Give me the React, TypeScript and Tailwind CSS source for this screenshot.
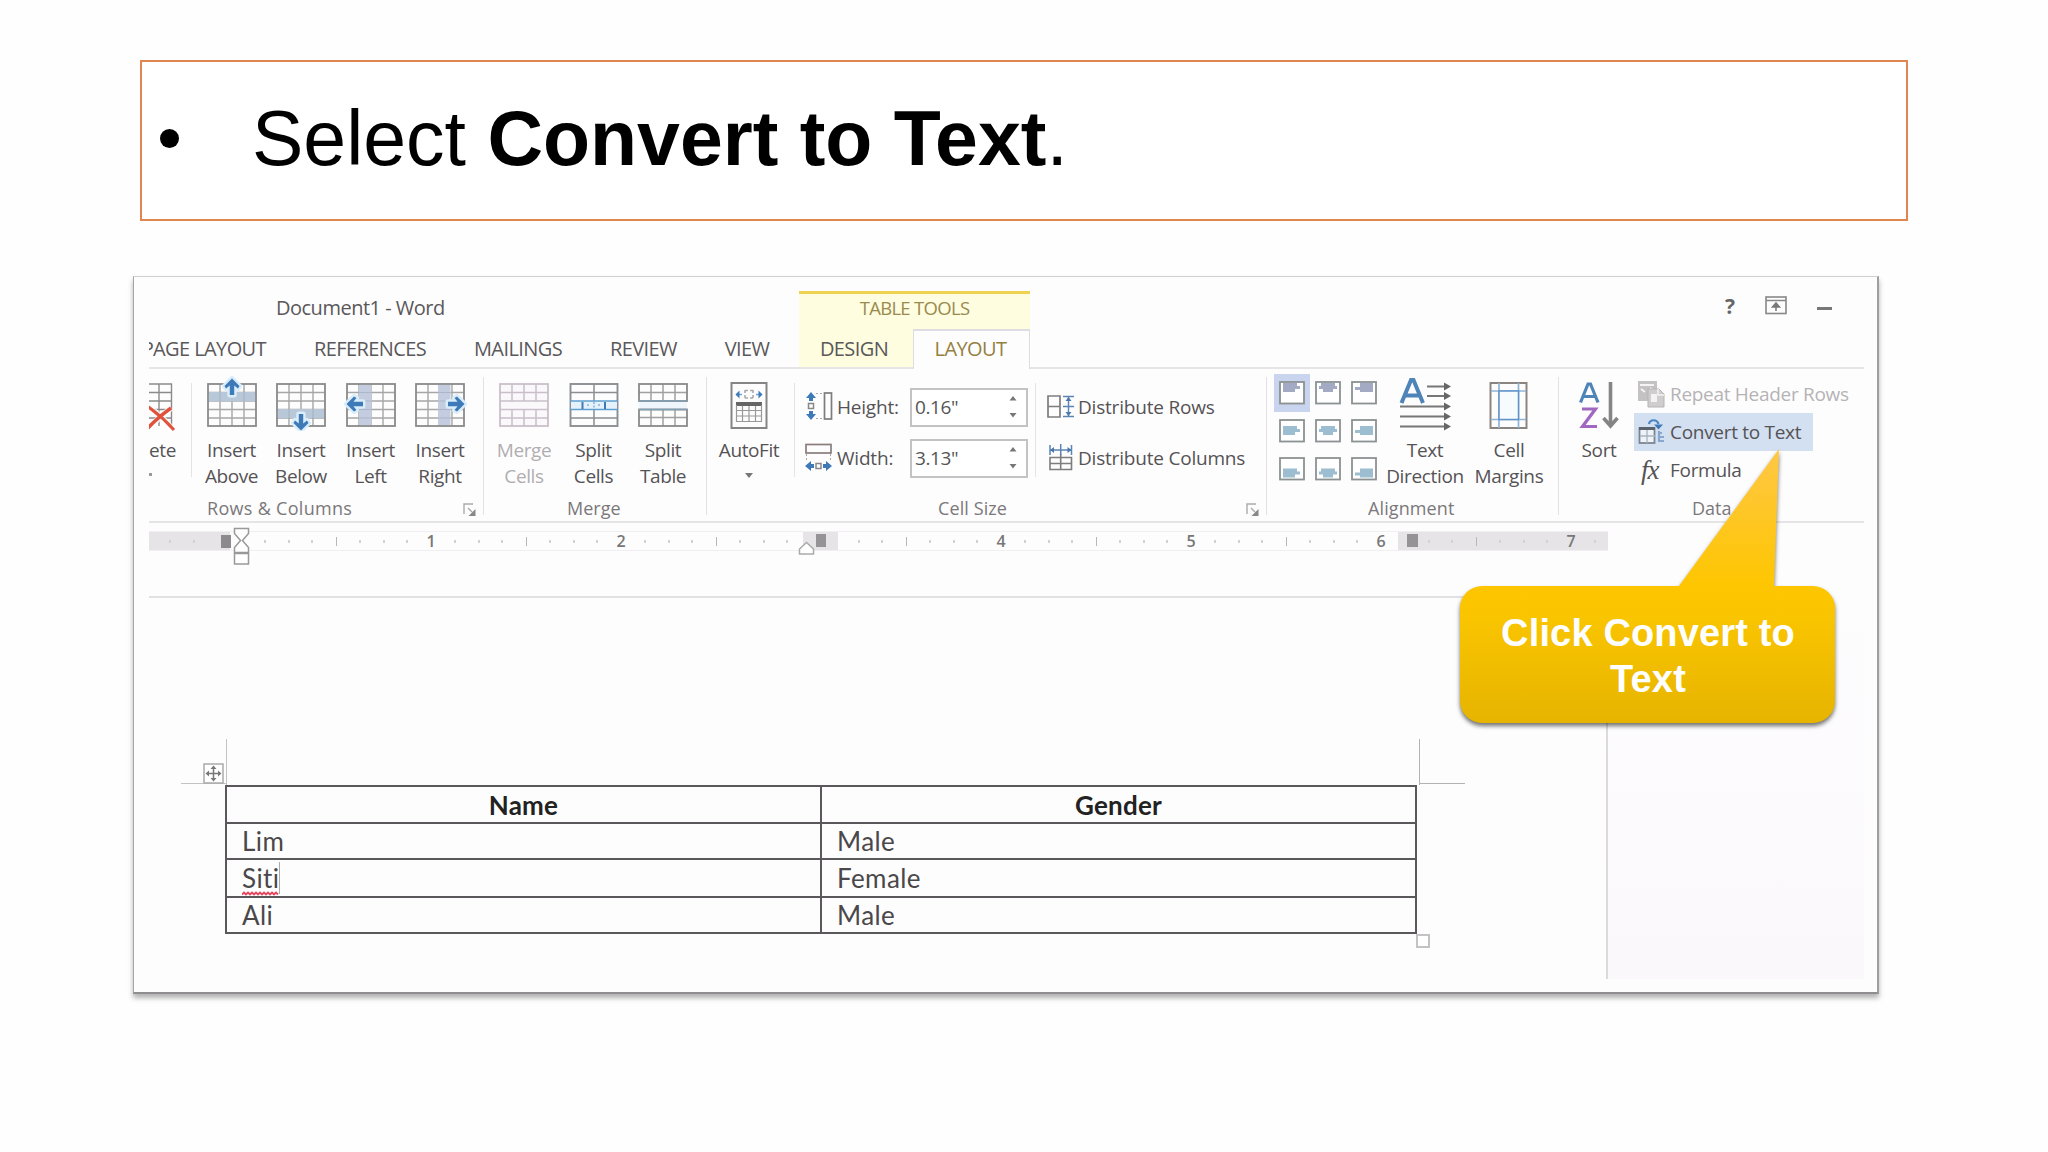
import React from "react";

const G = "#8a8a8a";
const BLUE = "#3f7ab8";

/* ---------- icons ---------- */

function Grid({ color = G, children }: { color?: string; children?: React.ReactNode }) {
  return (
    <svg width="60" height="56" viewBox="0 0 60 56" fill="none">
      <g stroke={color} strokeWidth="1.4">
        <path d="M18 9v42M30 9v42M42 9v42M6 17.5h48M6 26h48M6 34.5h48M6 43h48" opacity=".75" />
        <rect x="6" y="9" width="48" height="42" strokeWidth="1.8" />
      </g>
      {children}
    </svg>
  );
}

const ARROW = "M0 -8.5 L7.5 -1 L6 1.5 L2.2 -1.6 V8 H-2.2 V-1.6 L-6 1.5 L-7.5 -1 Z";

function Arrow({ x, y, r }: { x: number; y: number; r: number }) {
  return (
    <g transform={`translate(${x} ${y}) rotate(${r})`}>
      <path d={ARROW} stroke="#d9edfa" strokeWidth="5" strokeLinejoin="round" />
      <path d={ARROW} fill={BLUE} />
    </g>
  );
}

function InsertAbove() {
  return (
    <Grid>
      <rect x="7" y="17" width="46" height="9.5" fill="#b9c8d8" />
      <path d="M18 17v9M42 17v9" stroke="#9fb0c0" />
      <Arrow x={30} y={12} r={0} />
    </Grid>
  );
}
function InsertBelow() {
  return (
    <Grid>
      <rect x="7" y="34" width="46" height="9" fill="#b9c8d8" />
      <path d="M18 34v9M42 34v9" stroke="#9fb0c0" />
      <Arrow x={30} y={47} r={180} />
    </Grid>
  );
}
function InsertLeft() {
  return (
    <Grid>
      <rect x="18" y="10" width="12.5" height="40" fill="#c3cddf" />
      <path d="M18 17.5h12M18 26h12M18 34.5h12M18 43h12" stroke="#a9b6cb" />
      <Arrow x={14} y={29} r={-90} />
    </Grid>
  );
}
function InsertRight() {
  return (
    <Grid>
      <rect x="28" y="10" width="12.5" height="40" fill="#c3cddf" />
      <path d="M28 17.5h12M28 26h12M28 34.5h12M28 43h12" stroke="#a9b6cb" />
      <Arrow x={46} y={29} r={90} />
    </Grid>
  );
}
function MergeCells() {
  return (
    <svg width="60" height="56" viewBox="0 0 60 56" fill="none" stroke="#c9bfc9" strokeWidth="1.5">
      <rect x="6" y="9" width="48" height="42" fill="#fbf8fb" strokeWidth="1.8" />
      <path d="M6 17.5h48M6 26h48M6 34.5h48M6 43h48M18 9v17M30 9v17M42 9v17M18 34.5V51M30 34.5V51M42 34.5V51" />
    </svg>
  );
}
function SplitCells() {
  return (
    <svg width="60" height="56" viewBox="0 0 60 56" fill="none" stroke="#8b8f92" strokeWidth="1.5">
      <rect x="6.5" y="9" width="47" height="42" strokeWidth="1.9" />
      <path d="M6 17.5h48M6 43h48M30 9v17M30 34.5V51" />
      <rect x="7" y="26" width="46" height="9" fill="#e6f2fb" stroke="none" />
      <path d="M6 26h48M6 34.5h48" stroke="#5f9fd0" />
      <path d="M18.5 27v7M41 27v7" stroke={BLUE} strokeWidth="2" />
      <path d="M30 27v7M24 29v3M35 29v3" stroke="#86b3da" strokeDasharray="2 1.5" />
    </svg>
  );
}
function SplitTable() {
  return (
    <svg width="60" height="56" viewBox="0 0 60 56" fill="none" stroke={G} strokeWidth="1.5">
      <rect x="6" y="26" width="48" height="8.5" fill="#eef6fc" stroke="none" />
      <rect x="6" y="9" width="48" height="17" strokeWidth="1.8" />
      <rect x="6" y="34.5" width="48" height="16.5" strokeWidth="1.8" />
      <path d="M6 17.5h48M6 42.5h48M18 9v17M30 9v17M42 9v17M18 35v16M30 35v16M42 35v16" opacity=".8" />
      <path d="M6 26h48M6 34.5h48" stroke="#7f9fb4" />
    </svg>
  );
}
function AutoFit() {
  return (
    <svg width="60" height="56" viewBox="0 0 60 56" fill="none" stroke="#858585" strokeWidth="1.6">
      <rect x="12.5" y="8" width="35" height="45" strokeWidth="2" />
      <path d="M26 15.500h8M26 23h8" stroke="#aaa" strokeDasharray="3 2" />
      <path d="M26 15v8M34 15v8" stroke="#aaa" strokeDasharray="3 2" />
      <path d="M17 19.5h6M37 19.5h6" stroke="#6fa5d2" />
      <path d="M16.5 19.5l4-4v8zM43.5 19.5l-4-4v8z" fill={BLUE} stroke="none" />
      <path d="M17 29h26" stroke="#666" strokeWidth="4" />
      <path d="M17.5 30v16.5h25V30M17.5 35.5h25M17.5 41h25M23.5 31v15M30 31v15M36.5 31v15" stroke="#999" strokeWidth="1.2" />
    </svg>
  );
}
function DeleteIcon() {
  return (
    <svg width="30" height="56" viewBox="0 0 30 56" fill="none">
      <path d="M0 9h22.5v42M0 17.5h22M0 26h22M0 34.5h22M0 43h22M10 9v42" stroke={G} strokeWidth="1.4" />
      <path d="M1 33C8 38 17 46 24 55M22 33C15 39 6 46 -1 54" stroke="#fff" strokeWidth="6" opacity=".8" />
      <path d="M-2 31C8 38 17 46 25 55" stroke="#e0523c" strokeWidth="3" />
      <path d="M22 33C15 38 6 45 -2 54" stroke="#e0523c" strokeWidth="3.6" />
    </svg>
  );
}
function HeightIcon() {
  return (
    <svg width="28" height="30" viewBox="0 0 28 30" fill="none">
      <path d="M6 0L11 6H8V9H4V6H1Z M6 28L11 22H8V19H4V22H1Z" fill={BLUE} />
      <rect x="3.5" y="11.5" width="5" height="5" stroke="#888" strokeWidth="1.5" />
      <path d="M11 1.5h9M11 26.5h9" stroke="#aaa" strokeDasharray="2 2" />
      <rect x="19.5" y="1" width="7" height="26" stroke="#7d7d7d" strokeWidth="1.7" />
    </svg>
  );
}
function WidthIcon() {
  return (
    <svg width="28" height="30" viewBox="0 0 28 30" fill="none">
      <rect x="1" y="1.5" width="25" height="8.5" stroke="#8a7d7d" strokeWidth="1.7" />
      <path d="M1.5 11v6M25.5 11v6" stroke="#aaa" strokeDasharray="2 2" />
      <path d="M0 23L6 18V21H9V25H6V28Z M27 23L21 18V21H18V25H21V28Z" fill={BLUE} />
      <rect x="11" y="20.5" width="5" height="5" stroke="#888" strokeWidth="1.5" />
    </svg>
  );
}
function DistRows() {
  return (
    <svg width="28" height="26" viewBox="0 0 28 26" fill="none">
      <path d="M1 2h12v21H1zM1 12.5h12" stroke="#7d7d7d" strokeWidth="1.7" />
      <path d="M16 2.5h11M16 12.5h11M16 22.5h11" stroke="#5c84b5" strokeWidth="1.5" />
      <path d="M21.5 2v21" stroke="#5c84b5" strokeWidth="1.5" />
      <path d="M21.5 3l3 4h-6zM21.5 22l3-4h-6z" fill="#4b78ad" />
    </svg>
  );
}
function DistCols() {
  return (
    <svg width="28" height="28" viewBox="0 0 28 28" fill="none">
      <path d="M3 13.5h21.5v12H3zM3 19.5h21.5M13.7 10v16" stroke="#7d7d7d" strokeWidth="1.6" />
      <path d="M3 1v10M13.7 0v11M24.5 1v10M3 6h21.5" stroke="#5c84b5" strokeWidth="1.5" />
      <path d="M3 6l4-3v6zM24.5 6l-4-3v6z" fill="#4b78ad" />
    </svg>
  );
}
function AlignIcon({ h, v }: { h: number; v: number }) {
  const y = [2, 7, 11.5][v];
  const fill = v === 0 ? "#a3abc4" : "#9dbdd0";
  const pts = [
    `M4 ${y}h14v3h3v3h-5v3H4z`,
    `M6 ${y}h14v3h2v3h-4v3H8v-3H4v-3h2z`,
    `M9 ${y}h13v9h-13v-2h-5v-3h5z`,
  ][h];
  return (
    <svg width="26" height="24" viewBox="0 0 26 24" fill="none">
      <rect x="1" y="1" width="24" height="21.5" fill="#fff" stroke="#8b9291" strokeWidth="1.8" />
      <path d={pts} fill={fill} />
    </svg>
  );
}
function TextDirection() {
  return (
    <svg width="56" height="56" viewBox="0 0 56 56" fill="none">
      <path d="M4.5 28L14 5h2.5L26 28M8.5 20.5h13.5" stroke="#4f84b8" strokeWidth="4" />
      {[11.5, 21].map((y) => (
        <path key={y} d={`M30 ${y}h18`} stroke="#777" strokeWidth="2" />
      ))}
      {[31.5, 41.5, 51.5].map((y) => (
        <path key={y} d={`M3 ${y}h46`} stroke="#777" strokeWidth="2" />
      ))}
      {[11.5, 21, 31.5, 41.5, 51.5].map((y) => (
        <path key={y} d={`M47 ${y - 4}l7 4l-7 4z`} fill="#666" />
      ))}
    </svg>
  );
}
function CellMargins() {
  return (
    <svg width="60" height="56" viewBox="0 0 60 56" fill="none">
      <rect x="11.5" y="8" width="36" height="45" stroke="#8a8580" strokeWidth="2" />
      <path d="M20 8v45M39.5 8v45M12 16h35M12 44.5h35" stroke="#8fb4d8" strokeWidth="1.7" />
      <path d="M20 16h19.5v28.5H20z" fill="#f6fbfe" stroke="#5f93c8" strokeWidth="1.5" />
    </svg>
  );
}
function SortIcon() {
  return (
    <svg width="44" height="56" viewBox="0 0 44 56" fill="none">
      <path d="M3.5 27.5L11 9h2.5L21 27.5M6.5 21.5H18" stroke="#4f84b8" strokeWidth="3.2" />
      <path d="M5 34h13.5L5.5 51.5H20" stroke="#a068c0" strokeWidth="3.2" />
      <path d="M33.5 7v44M26.5 43l7 8l7-8" stroke="#858585" strokeWidth="3.6" />
    </svg>
  );
}
function RepeatIcon() {
  return (
    <svg width="28" height="28" viewBox="0 0 28 28" fill="none">
      <rect x="0" y="1" width="19" height="20" fill="#c4c2c2" />
      <path d="M2 5h14M3 9l4 3M12 8l3 2" stroke="#f4f4f4" strokeWidth="2" />
      <path d="M10 9h11l5 5v13H10z" fill="#cfcdcd" stroke="#b5b3b3" />
      <path d="M13 14h6v8h-6z" fill="#f3f3f3" />
      <path d="M20 9v6h6" stroke="#f4f4f4" strokeWidth="1.5" />
    </svg>
  );
}
function ConvertIcon() {
  return (
    <svg width="28" height="28" viewBox="0 0 28 28" fill="none">
      <rect x="1.5" y="10" width="15" height="15" fill="#eef3fa" stroke="#7d8590" strokeWidth="1.8" />
      <path d="M1 10.5h16" stroke="#5a626c" strokeWidth="3" />
      <path d="M2 18h15M9 12v13" stroke="#aab4be" strokeWidth="1.3" />
      <path d="M11 6C12 1 19 1 20.500 6" stroke="#4a86c4" strokeWidth="2.2" />
      <path d="M16 6.5h9L20.5 11.500z" fill="#3f7ab8" />
      <path d="M21 13v11M21 15h3M21 19h5M21 23h5" stroke="#86a8cc" strokeWidth="2.2" />
    </svg>
  );
}
function Launcher() {
  return (
    <svg width="14" height="14" viewBox="0 0 14 14" fill="none">
      <path d="M1 11V1h9" stroke="#aaa" strokeWidth="1.4" />
      <path d="M5 5l4 4" stroke="#aaa" strokeWidth="1.4" />
      <path d="M12.5 6v7h-7z" fill="#888" />
    </svg>
  );
}

/* ---------- ribbon parts ---------- */

function BigButton({
  icon, lines, box, dim = false, caret = false, tight,
}: {
  icon: React.ReactNode; lines: string[]; box: string; dim?: boolean; caret?: boolean; tight?: string;
}) {
  return (
    <div className={`flex flex-none flex-col items-center ${box}`}>
      <div className="flex h-[68px] flex-none items-start pt-[6px]">{icon}</div>
      {lines.map((l) => (
        <div
          key={l}
          className={`flex h-[26px] justify-center whitespace-nowrap text-[19px] leading-[26px] ${tight ?? "tracking-[-0.4px]"} ${dim ? "text-[#b0aeb0]" : "text-[#555355]"}`}
        >
          {l}
        </div>
      ))}
      {caret && (
        <svg width="8" height="5" viewBox="0 0 8 5" className="mt-[10px]">
          <path d="M0 0h8L4 5z" fill="#777" />
        </svg>
      )}
    </div>
  );
}

function ShortSep() {
  return <div className="mt-[14px] h-[94px] w-px flex-none bg-[#e6e3e6]" />;
}

function Group({ box, label, labelBox, launcher, children, last }: {
  box: string; label: string; labelBox: string; launcher?: boolean; children: React.ReactNode; last?: boolean;
}) {
  return (
    <div className={`flex flex-none ${box}`}>
      <div className="flex min-w-0 flex-1 flex-col">
        <div className="flex h-[126px] flex-none">{children}</div>
        <div className="flex h-[27px] items-start justify-between pr-[6px]">
          <div className={`whitespace-nowrap text-[18px] leading-[26px] text-[#7a787a] ${labelBox}`}>{label}</div>
          {launcher && <div className="pt-[8px]"><Launcher /></div>}
        </div>
      </div>
      {!last && <div className="mt-[8px] h-[138px] w-px flex-none bg-[#e3e1e3]" />}
    </div>
  );
}

function SpinBox({ value }: { value: string }) {
  return (
    <div className="flex h-[39px] w-[118px] items-center justify-between border-2 border-[#c4c2c4] bg-white pl-[3px] pr-[8px] text-[19px] tracking-[-0.4px] text-[#555]">
      <span>{value}</span>
      <svg width="10" height="22" viewBox="0 0 10 22" fill="#777">
        <path d="M1.5 4.5h7L5 0zM1.5 17h7L5 21.5z" />
      </svg>
    </div>
  );
}

/* ---------- ruler ---------- */

const TICKS = Array.from({ length: 61 }, (_, k) => k - 3);
const HIDDEN = [-1, 0, 24, 25, 49];

function Ruler() {
  return (
    <div className="relative mt-[8px] flex h-[20px] w-[1459px] flex-none border-y border-[#f1eff1]">
      <div className="w-[81px] flex-none bg-[#e6e4e6]" />
      <div className="w-[573px] flex-none" />
      <div className="w-[35px] flex-none bg-[#e6e4e6]" />
      <div className="w-[560px] flex-none" />
      <div className="flex-1 bg-[#e6e4e6]" />
      <div className="absolute inset-y-0 left-[9px] flex items-center">
        {TICKS.map((i) => (
          <div key={i} className="flex w-[23.75px] flex-none items-center justify-center">
            {HIDDEN.includes(i) ? null : i > 0 && i % 8 === 0 ? (
              <span className="text-[16px] font-semibold leading-[18px] text-[#777]">{i / 8}</span>
            ) : i > 0 && i % 4 === 0 ? (
              <span className="h-[9px] w-px bg-[#b9b7b9]" />
            ) : (
              <span className="h-[3px] w-[2px] bg-[#d3d1d3]" />
            )}
          </div>
        ))}
      </div>
      <div className="absolute left-[72px] top-[3px] h-[13px] w-[10px] bg-[#8c8a8c]" />
      <div className="absolute left-[667px] top-[2px] h-[13px] w-[10px] bg-[#959395]" />
      <div className="absolute left-[1258px] top-[2px] h-[13px] w-[11px] bg-[#959395]" />
      <svg className="absolute left-[84px] top-[-5px]" width="18" height="39" viewBox="0 0 18 39" fill="#fff" stroke="#999" strokeWidth="1.5">
        <path d="M1.5 1.5h14v5l-6 7l6 7v5h-14v-5l6-7l-6-7z" />
        <path d="M1.5 26.5h14v10.5h-14z" />
      </svg>
      <svg className="absolute left-[649px] top-[9px]" width="18" height="15" viewBox="0 0 18 15" fill="#fff" stroke="#aaa" strokeWidth="1.5">
        <path d="M1.5 13h14V8l-7-6.5l-7 6.5z" />
      </svg>
    </div>
  );
}

/* ---------- document table ---------- */

const ROWS = [
  { name: "Lim", gender: "Male", h: "h-[36px]" },
  { name: "Siti", gender: "Female", h: "h-[38px]" },
  { name: "Ali", gender: "Male", h: "h-[36px]" },
];

function DocTable() {
  return (
    <div className="relative ml-[76px] mt-[187px] w-[1192px] border-x-2 border-b-2 border-[#5a585a] font-['Lato'] text-[26px] leading-[30px] tracking-[0.4px] text-[#4a484a]">
      <div className="flex h-[37px] border-t-2 border-[#5a585a] font-bold tracking-[0.2px] text-[#222]">
        <div className="flex w-[595px] items-center justify-center border-r-2 border-[#5a585a]">Name</div>
        <div className="flex flex-1 items-center justify-center">Gender</div>
      </div>
      {ROWS.map((r) => (
        <div key={r.name} className={`flex border-t-2 border-[#5a585a] ${r.h}`}>
          <div className="flex w-[595px] items-center border-r-2 border-[#5a585a] pb-px pl-[15px]">
            {r.name === "Siti" ? (
              <span className="relative border-r border-[#aaa] leading-[32px]">
                {r.name}
                <svg className="absolute left-0 top-[29px]" width="38" height="5" viewBox="0 0 38 5" fill="none">
                  <path d="M0 3.5l2-2l2 2l2-2l2 2l2-2l2 2l2-2l2 2l2-2l2 2l2-2l2 2l2-2l2 2l2-2l2 2l2-2l2 2" stroke="#e8455c" strokeWidth="1.8" />
                </svg>
              </span>
            ) : (
              r.name
            )}
          </div>
          <div className="flex flex-1 items-center pb-px pl-[15px]">{r.gender}</div>
        </div>
      ))}
      <div className="absolute left-[-1px] top-[-46px] h-[46px] w-px bg-[#c4c2c4]" />
      <div className="absolute left-[-46px] top-[-2px] h-px w-[46px] bg-[#c4c2c4]" />
      <div className="absolute right-[-5px] top-[-46px] h-[46px] w-px bg-[#b4b2b4]" />
      <div className="absolute right-[-50px] top-[-2px] h-px w-[46px] bg-[#b4b2b4]" />
      <svg className="absolute left-[-24px] top-[-22px]" width="21" height="21" viewBox="0 0 21 21" fill="none">
        <rect x="1" y="1" width="19" height="19" fill="#fff" stroke="#aaa" strokeWidth="1.5" />
        <path d="M10.5 4v13M4 10.5h13" stroke="#777" strokeWidth="1.5" />
        <path d="M10.5 2.5l3 3.5h-6zM10.5 18.5l3-3.5h-6zM2.5 10.5l3.5-3v6zM18.5 10.5l-3.5-3v6z" fill="#777" />
      </svg>
      <div className="absolute bottom-[-16px] right-[-15px] size-[14px] border-2 border-[#c4c2c4] bg-white" />
    </div>
  );
}

/* ---------- callout ---------- */

function Callout() {
  return (
    <div className="absolute left-[1326px] top-[172px] flex h-[275px] w-[376px] flex-col">
      <svg className="absolute inset-0 overflow-visible" width="376" height="275" viewBox="0 0 376 275">
        <defs>
          <linearGradient id="gold" x1="0" y1="0" x2="0" y2="1">
            <stop offset="0" stopColor="#ffc746" />
            <stop offset=".5" stopColor="#fec600" />
            <stop offset=".62" stopColor="#f9c400" />
            <stop offset="1" stopColor="#e6b400" />
          </linearGradient>
        </defs>
        <path
          d="M22 137H219L319 0L314 137H353A22 22 0 0 1 375 159V252A22 22 0 0 1 353 274H22A22 22 0 0 1 0 252V159A22 22 0 0 1 22 137Z"
          fill="url(#gold)"
          className="drop-shadow-[0_3px_2px_rgba(0,0,0,0.55)]"
        />
      </svg>
      <div className="relative mt-[161px] text-center font-['Liberation_Sans'] text-[38px] font-bold leading-[46px] tracking-[0.15px] text-white">
        Click Convert to
        <br />
        Text
      </div>
    </div>
  );
}

export default function App() {
  return (
    <div className="h-[1152px] w-[2048px] overflow-hidden bg-[#fefefe] pt-[60px] font-['Open_Sans',sans-serif]">
      <div className="ml-[140px] flex h-[161px] w-[1768px] items-center border-2 border-[#e08650] bg-white pb-[4px] font-['Liberation_Sans'] text-[77px] leading-none text-black">
        <span className="ml-[18px] size-[19px] rounded-full bg-black" />
        <span className="ml-[73px] whitespace-pre">
          Select <b>Convert to Text</b>.
        </span>
      </div>

      <div className="relative ml-[133px] mt-[55px] flex h-[718px] w-[1746px] flex-col border-b-2 border-l border-r-2 border-t border-b-[#8f8d8f] border-l-[#a5a3a5] border-r-[#a09ea0] border-t-[#d2d0d2] bg-[#fefdfe] pl-[15px] pr-[13px] shadow-[0_4px_5px_rgba(0,0,0,0.3)]">
        {/* title bar and tabs */}
        <div className="flex h-[92px] flex-none text-[20px] leading-[28px] text-[#5a585a]">
          <div className="flex w-[650px] flex-col border-b-2 border-[#e6e4e6]">
            <div className="ml-[127px] mt-[17px] h-[41px] tracking-[-0.5px]">Document1 - Word</div>
            <div className="flex w-[650px] overflow-hidden whitespace-nowrap tracking-[-0.6px]">
              <div className="flex w-[117px] flex-none justify-end">PAGE LAYOUT</div>
              <div className="ml-[33px] flex w-[142px] flex-none justify-center">REFERENCES</div>
              <div className="flex w-[154px] flex-none justify-center">MAILINGS</div>
              <div className="flex w-[97px] flex-none justify-center">REVIEW</div>
              <div className="flex w-[110px] flex-none justify-center">VIEW</div>
            </div>
          </div>
          <div className="mt-[14px] flex w-[231px] flex-col border-t-[3px] border-[#efd24f] bg-[#fefde0]">
            <div className="h-[35px] pt-px text-center text-[18.5px] leading-[26px] tracking-[-0.7px] text-[#9a8a4e]">TABLE TOOLS</div>
            <div className="flex h-[40px] tracking-[-0.6px]">
              <div className="w-[114px] border-b-2 border-[#e6e4e6] pt-[6px] text-center">
                <span className="pr-[4px]">DESIGN</span>
              </div>
              <div className="flex-1 border-x border-t-2 border-[#dfdde2] bg-[#fefdfe] pr-[2px] pt-[4px] text-center text-[#94803f]">LAYOUT</div>
            </div>
          </div>
          <div className="flex flex-1 justify-end gap-[30px] border-b-2 border-[#e6e4e6] pr-[32px] pt-[15px]">
            <span className="text-[21px] font-bold text-[#666]">?</span>
            <svg width="22" height="19" viewBox="0 0 22 19" fill="none" className="mt-[4px]">
              <rect x="1" y="1" width="20" height="16.5" stroke="#888" strokeWidth="1.6" />
              <path d="M1 4.5h20" stroke="#888" strokeWidth="1.5" />
              <path d="M11 15V8M7.5 11L11 7l3.5 4z" stroke="#777" strokeWidth="1.5" fill="#777" />
            </svg>
            <div className="mt-[15px] h-[3px] w-[15px] bg-[#777]" />
          </div>
        </div>

        {/* ribbon */}
        <div className="flex h-[153px] flex-none">
          <Group box="w-[335px]" label="Rows & Columns" labelBox="ml-[58px] tracking-[0.3px]" launcher>
            <div className="flex w-[42px] flex-none flex-col overflow-hidden">
              <div className="flex h-[68px] flex-none pt-[6px]">
                <DeleteIcon />
              </div>
              <div className="text-[19px] leading-[26px] tracking-[-0.4px] text-[#555355]">ete</div>
              <div className="mt-[10px] size-[3px] bg-[#999]" />
            </div>
            <ShortSep />
            <BigButton box="ml-[5px] w-[69px]" icon={<InsertAbove />} lines={["Insert", "Above"]} />
            <BigButton box="w-[70px]" icon={<InsertBelow />} lines={["Insert", "Below"]} />
            <BigButton box="w-[69px]" icon={<InsertLeft />} lines={["Insert", "Left"]} />
            <BigButton box="w-[70px]" icon={<InsertRight />} lines={["Insert", "Right"]} />
          </Group>

          <Group box="w-[223px]" label="Merge" labelBox="ml-[83px]">
            <BigButton box="ml-[5px] w-[70px]" icon={<MergeCells />} lines={["Merge", "Cells"]} dim />
            <BigButton box="w-[69px]" icon={<SplitCells />} lines={["Split", "Cells"]} />
            <BigButton box="w-[70px]" icon={<SplitTable />} lines={["Split", "Table"]} />
          </Group>

          <Group box="w-[560px]" label="Cell Size" labelBox="ml-[231px] tracking-[0.1px]" launcher>
            <BigButton box="ml-[7px] w-[70px]" icon={<AutoFit />} lines={["AutoFit"]} caret />
            <div className="w-[10px] flex-none" />
            <ShortSep />
            <div className="flex w-[240px] flex-none flex-col gap-[13px] pl-[10px] pt-[19px] text-[19px] tracking-[-0.2px] text-[#555355]">
              <div className="flex h-[38px] items-center">
                <HeightIcon />
                <div className="ml-[4px] w-[73px]">Height:</div>
                <SpinBox value={'0.16"'} />
              </div>
              <div className="flex h-[38px] items-center">
                <WidthIcon />
                <div className="ml-[4px] w-[73px]">Width:</div>
                <SpinBox value={'3.13"'} />
              </div>
            </div>
            <ShortSep />
            <div className="flex flex-col gap-[13px] whitespace-nowrap pl-[11px] pt-[19px] text-[19px] tracking-[-0.2px] text-[#555355]">
              <div className="flex h-[38px] items-center gap-[3px]">
                <DistRows />
                Distribute Rows
              </div>
              <div className="flex h-[38px] items-center gap-[3px]">
                <DistCols />
                Distribute Columns
              </div>
            </div>
          </Group>

          <Group box="w-[292px]" label="Alignment" labelBox="ml-[101px] tracking-[0.1px]">
            <div className="ml-[7px] mt-[5px] grid h-[114px] w-[108px] flex-none grid-cols-3 grid-rows-3">
              {[0, 1, 2].map((v) =>
                [0, 1, 2].map((h) => (
                  <div
                    key={`${v}${h}`}
                    className={`flex items-center justify-center ${v === 0 && h === 0 ? "bg-[#c9d5ee]" : ""}`}
                  >
                    <AlignIcon h={h} v={v} />
                  </div>
                )),
              )}
            </div>
            <BigButton box="ml-[3px] w-[80px]" icon={<TextDirection />} lines={["Text", "Direction"]} tight="tracking-[-0.35px]" />
            <BigButton box="ml-[4px] w-[80px]" icon={<CellMargins />} lines={["Cell", "Margins"]} tight="tracking-[-0.35px]" />
          </Group>

          <Group box="w-[306px]" label="Data" labelBox="ml-[133px]" last>
            <BigButton box="ml-[5px] w-[70px]" icon={<SortIcon />} lines={["Sort"]} />
            <div className="mt-[6px] flex w-[226px] flex-col whitespace-nowrap text-[19px] tracking-[-0.3px] text-[#555355]">
              <div className="flex h-[38px] items-center pl-[4px] text-[#b5b3b5]">
                <RepeatIcon />
                <span className="ml-[4px]">Repeat Header Rows</span>
              </div>
              <div className="flex h-[38px] w-[179px] items-center bg-[#d3e0f1] pl-[4px]">
                <ConvertIcon />
                <span className="ml-[4px]">Convert to Text</span>
              </div>
              <div className="flex h-[38px] items-center pl-[4px]">
                <span className="w-[28px] pl-[3px] font-['Liberation_Serif'] text-[27px] italic leading-none tracking-[-1px] text-[#555]">fx</span>
                <span className="ml-[4px]">Formula</span>
              </div>
            </div>
          </Group>
        </div>
        <div className="-mt-px h-[2px] flex-none bg-[#e6e4e6]" />

        <Ruler />

        {/* document area */}
        <div className="mt-[45px] flex h-[383px] flex-none">
          <div className="h-full w-[1457px] flex-none border-t-2 border-[#e2e0e2]">
            <DocTable />
          </div>
          <div className="h-full flex-1 border-l-2 border-[#dcdadc] bg-linear-to-b from-[#fefdfe] to-[#faf8fb]" />
        </div>

        <Callout />
      </div>
    </div>
  );
}
